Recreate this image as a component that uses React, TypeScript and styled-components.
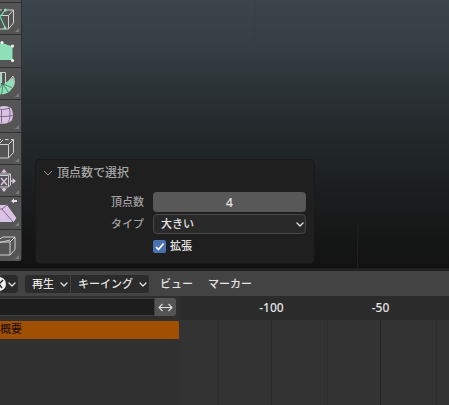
import React, { useState } from "react";
import styled, { createGlobalStyle } from "styled-components";

const GlobalStyle = createGlobalStyle`
  * { box-sizing: border-box; }
  body {
    margin: 0;
    background: #333333;
    overflow: hidden;
    font-family: "Noto Sans", "Noto Sans CJK JP", sans-serif;
    font-size: 11px;
    line-height: 16px;
    color: #e4e4e4;
  }
  button, input, select { font: inherit; color: inherit; margin: 0; border: 0; }
`;

const Screen = styled.div`
  display: flex;
  flex-direction: column;
  min-height: 100vh;
`;

const Viewport = styled.main`
  display: flex;
  gap: 13px;
  min-height: 271px;
  border-bottom: 3px solid #202020;
  background:
    linear-gradient(#384144, #343c3e) 254px 0 / 1px 47px no-repeat,
    linear-gradient(#1e1e1e, #1e1e1e) 357px 222px / 1px 46px no-repeat,
    linear-gradient(#3b454c 0, #353e42 50px, #2b3236 90px, #23292b 135px, #1b1f21 185px, #171818 225px, #121212 268px);
`;

const Toolbar = styled.div`
  display: grid;
  grid-template-rows: 2px repeat(8, 1fr);
  gap: 1px;
  width: 22px;
  flex: none;
  margin-bottom: 7px;
  padding-right: 1px;
  background: #303030;
  border-radius: 0 0 4px 0;
  overflow: hidden;
`;

const ToolEdge = styled.div`
  background: #555555;
`;

const Tool = styled.button`
  display: block;
  padding: 0;
  overflow: hidden;
  background: #555555;
  svg { display: block; }
`;

const Panel = styled.section`
  align-self: flex-end;
  width: 100%;
  max-width: 280px;
  margin-bottom: 4px;
  padding: 4px 8px 7px;
  background: #1f1f1f;
  border: 1px solid #191919;
  border-radius: 5px;
`;

const PanelTitle = styled.button`
  display: flex;
  align-items: center;
  gap: 5px;
  height: 18px;
  padding: 0;
  margin-bottom: 10px;
  background: none;
  color: #a6a6a6;
  font-size: 12px;
  font-weight: 500;
`;

const Fields = styled.div`
  display: grid;
  grid-template-columns: 100px 1fr;
  column-gap: 9px;
  row-gap: 2px;
  align-items: center;
`;

const FieldLabel = styled.label`
  text-align: right;
  color: #a0a0a0;
  font-weight: 500;
`;

const NumberField = styled.input`
  width: 100%;
  height: 20px;
  padding: 0;
  text-align: center;
  font-size: 12px;
  font-weight: 500;
  background: #585858;
  border-radius: 4px;
`;

const SelectBox = styled.div`
  display: grid;
  align-items: center;
  > * { grid-area: 1 / 1; }
  > svg { justify-self: end; pointer-events: none; }
`;

const Select = styled.select`
  appearance: none;
  width: 100%;
  height: 20px;
  padding: 0 7px;
  background: #292929;
  border: 1px solid #474747;
  border-radius: 4px;
  font-weight: 500;
`;

const CheckLabel = styled.label`
  grid-column: 2;
  display: flex;
  align-items: center;
  gap: 4px;
  height: 20px;
  font-weight: 500;
`;

const CheckBox = styled.span`
  display: grid;
  > * { grid-area: 1 / 1; }
  > svg { pointer-events: none; }
`;

const CheckInput = styled.input`
  appearance: none;
  width: 13px;
  height: 13px;
  background: #585858;
  border-radius: 2px;
  &:checked { background: #4a72b3; }
  &:not(:checked) + svg { visibility: hidden; }
`;

const Header = styled.header`
  display: flex;
  align-items: center;
  height: 25px;
  background: #434343;
`;

const MenuGroup = styled.div`
  display: flex;
  gap: 1px;
  margin-right: 7px;
  border-radius: 3px;
  overflow: hidden;
`;

const DropButton = styled.button<{ $inset?: boolean }>`
  display: flex;
  align-items: center;
  gap: 4px;
  height: 18px;
  padding: 0 0 0 ${(p) => (p.$inset ? "7px" : "0")};
  background: #2b2b2b;
  font-weight: 500;
  white-space: nowrap;
`;

const MenuButton = styled.button`
  height: 18px;
  padding: 0 4px;
  margin-right: 7px;
  background: none;
  font-weight: 500;
  white-space: nowrap;
`;

const Timeline = styled.div`
  display: flex;
  flex: 1;
`;

const Channels = styled.div`
  flex: 0 0 179px;
  min-width: 0;
  background: #303030;
`;

const SearchRow = styled.div`
  display: flex;
  height: 23px;
  padding: 2px 3px 3px 0;
  background: #2f2f2f;
`;

const Search = styled.input`
  flex: 1;
  min-width: 0;
  padding: 0 4px;
  background: #1d1d1d;
  border: 1px solid #3d3d3d;
  border-left: 0;
`;

const SwapButton = styled.button`
  display: grid;
  place-items: center;
  width: 21px;
  padding: 0;
  background: #545454;
  border-radius: 0 3px 3px 0;
`;

const Summary = styled.div`
  height: 18px;
  margin-top: 2px;
  background: #a05000;
  color: #160b00;
  border-radius: 0 1px 1px 0;
`;

const Tracks = styled.div`
  display: flex;
  flex-direction: column;
  flex: 1;
  min-width: 0;
`;

const Ruler = styled.div`
  display: flex;
  height: 24px;
  padding-left: 38px;
  overflow: hidden;
  background: #2b2b2b;
`;

const Mark = styled.span`
  flex: none;
  width: 109px;
  text-align: center;
  font-size: 12px;
  font-weight: 500;
  line-height: 24px;
`;

const Lanes = styled.div`
  flex: 1;
  background:
    linear-gradient(90deg, #282828 1px, transparent 1px) 92px 0 / 109px 100%,
    linear-gradient(90deg, #2d2d2d 1px, transparent 1px) 39px 0 / 109px 100%,
    #333333;
`;

const Chevron = () => (
  <svg width="12" height="12" viewBox="0 0 12 12" fill="none" stroke="#e2e2e2" strokeWidth="1.3" strokeLinecap="round" strokeLinejoin="round">
    <path d="M3 5 6 8 9 5" />
  </svg>
);

const Corner = () => <path d="M19 25v4h-4z" fill="#7c7c7c" />;

const white = { fill: "none", stroke: "#d0d0d0", strokeWidth: 1, strokeLinejoin: "round" as const };

const tools: { name: string; art: React.ReactNode }[] = [
  {
    name: "ナイフ",
    art: (
      <>
        <path d="M-2 12.5H8.5V26H-2M8.5 12.5l5-5.500v13l-5 6M13.500 7H5M2 7h-4" {...white} />
        <path d="M5.500 7 0 13.500 5 24.500" fill="none" stroke="#72cfa4" strokeWidth="1.300" />
        <circle cx="5.500" cy="7" r="1.500" fill="#86e0b7" />
        <circle cx="5" cy="25" r="1.500" fill="#86e0b7" />
        <Corner />
      </>
    ),
  },
  {
    name: "ポリビルド",
    art: (
      <>
        <path d="M-2 8.500 2 7l10.500 3.500V24H-2z" fill="#8ee0b8" />
        <circle cx="2" cy="6.500" r="1.600" fill="#f2f2f2" />
        <circle cx="12.500" cy="10" r="1.600" fill="#f2f2f2" />
        <circle cx="12.500" cy="24.500" r="1.600" fill="#f2f2f2" />
      </>
    ),
  },
  {
    name: "スピン",
    art: (
      <>
        <path d="M-2 6l3-1.500V17l3-1 9-6.500c2 4 1 10-3 13.500-3 3-8 4-12 3z" fill="#8ee0b8" />
        <path d="M3 16 1.500 27M3 16l5.500 8.500M3 16l10 4M3 16-2 22" fill="none" stroke="#4c7962" strokeWidth="0.900" />
        <path d="M-1 4.500h6.500V16M1.500 5v10M8 14l5-6c2 4 2 9-1.500 12.500" {...white} />
        <Corner />
      </>
    ),
  },
  {
    name: "スムーズ",
    art: (
      <>
        <path d="M-3 8C2 5 8 6 11 8c2 3 2.500 8 1 12-2 3-8 5-15 3z" fill="#d9c2e4" />
        <path d="M-1 16.500c5 0 9 0 13.500-1M9 7c1.500 5 1.500 12-1 16M-2 9c5 1 9 0 12-1M1.500 10v13" fill="none" stroke="#745e7d" strokeWidth="0.900" />
        <Corner />
      </>
    ),
  },
  {
    name: "辺をスライド",
    art: (
      <>
        <path d="M-2 11.500H8.500V25H-2M8.500 11.500l5-5v13l-5 5.500M13.500 6.500H11M8.500 6.500H5M3 7 0 10M1 6.500h-3" {...white} />
        <Corner />
      </>
    ),
  },
  {
    name: "収縮/膨張",
    art: (
      <>
        <path d="M-2 10.500H8.500V22H-2M8.500 10.500l2-1.500v11l-2 2M0 9h10.500" {...white} />
        <path d="M1 13l6 7M7 13l-6 7M11 16h3M4 8V5M4 23v3" stroke="#d9c2e4" strokeWidth="1.500" />
        <path d="M4 4l3 3.500H1zM16 16l-3.500-3v6zM4 27l3-3.500H1z" fill="#d9c2e4" />
        <Corner />
      </>
    ),
  },
  {
    name: "せん断",
    art: (
      <>
        <path d="M-2 8h9l9.500 13-3 4H-2z" fill="#d9c2e4" />
        <path d="M-2 12h4l5-4M2 12l11 13" fill="none" stroke="#806b8a" />
        <path d="M11 4l3-2.500v1.500h3v2h-3v1.500z" fill="#e9d8f0" />
        <Corner />
      </>
    ),
  },
  {
    name: "リップ領域",
    art: (
      <>
        <path d="M-2 12H10v13H-2M10 12l5-5v12.500L10 25M15 7H3l-5 3M-2 13l12-3" {...white} />
        <Corner />
      </>
    ),
  },
];

export default function App() {
  const [count, setCount] = useState("4");
  const [kind, setKind] = useState("greater");
  const [extend, setExtend] = useState(true);

  return (
    <Screen>
      <GlobalStyle />
      <Viewport>
        <Toolbar>
          <ToolEdge />
          {tools.map((tool) => (
            <Tool key={tool.name} type="button" aria-label={tool.name}>
              <svg width="21" height="31" viewBox="0 0 21 31">{tool.art}</svg>
            </Tool>
          ))}
        </Toolbar>
        <Panel>
          <PanelTitle type="button" aria-expanded="true">
            <svg width="8" height="8" viewBox="0 0 8 8" fill="none" stroke="#969696">
              <path d="M0 2l4 4 4-4" />
            </svg>
            頂点数で選択
          </PanelTitle>
          <Fields>
            <FieldLabel htmlFor="count">頂点数</FieldLabel>
            <NumberField id="count" inputMode="numeric" value={count} onChange={(e) => setCount(e.target.value)} />
            <FieldLabel htmlFor="kind">タイプ</FieldLabel>
            <SelectBox>
              <Select id="kind" value={kind} onChange={(e) => setKind(e.target.value)}>
                <option value="greater">大きい</option>
              </Select>
              <Chevron />
            </SelectBox>
            <CheckLabel>
              <CheckBox>
                <CheckInput type="checkbox" checked={extend} onChange={(e) => setExtend(e.target.checked)} />
                <svg width="13" height="13" viewBox="0 0 13 13" fill="none" stroke="#ffffff" strokeWidth="1.700">
                  <path d="M3 7l2.500 2.500L10.500 3.500" />
                </svg>
              </CheckBox>
              拡張
            </CheckLabel>
          </Fields>
        </Panel>
      </Viewport>
      <Header>
        <MenuGroup>
          <DropButton type="button" aria-label="エディタータイプ">
            <svg width="18" height="18" viewBox="0 0 18 18">
              <circle cx="-1" cy="9" r="7" fill="#f0f0f0" />
              <path d="M-2 10 3 5M-1 9l3 4" stroke="#2b2b2b" strokeWidth="1.500" />
              <path d="M9 8l3 3 3-3" fill="none" stroke="#e2e2e2" strokeWidth="1.300" strokeLinecap="round" strokeLinejoin="round" />
            </svg>
          </DropButton>
        </MenuGroup>
        <MenuGroup>
          <DropButton type="button" $inset>再生<Chevron /></DropButton>
          <DropButton type="button" $inset>キーイング<Chevron /></DropButton>
        </MenuGroup>
        <MenuButton type="button">ビュー</MenuButton>
        <MenuButton type="button">マーカー</MenuButton>
      </Header>
      <Timeline>
        <Channels>
          <SearchRow>
            <Search type="text" aria-label="検索" />
            <SwapButton type="button" aria-label="反転">
              <svg width="15" height="11" viewBox="0 0 15 11" fill="none" stroke="#e0e0e0" strokeWidth="1.100">
                <path d="M1 5.500h13M4.500 2 1 5.500 4.500 9M10.500 2 14 5.500 10.500 9" />
              </svg>
            </SwapButton>
          </SearchRow>
          <Summary>概要</Summary>
        </Channels>
        <Tracks>
          <Ruler>
            <Mark>-100</Mark>
            <Mark>-50</Mark>
            <Mark />
          </Ruler>
          <Lanes />
        </Tracks>
      </Timeline>
    </Screen>
  );
}
